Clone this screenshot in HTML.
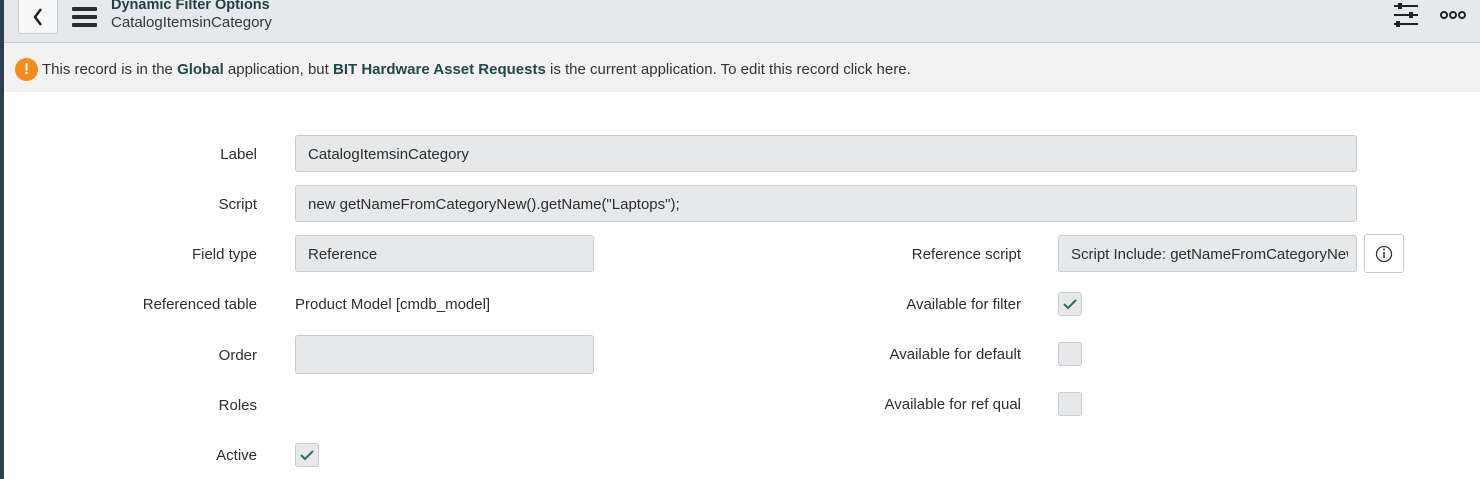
<!DOCTYPE html>
<html><head><style>
body{margin:0;width:1480px;height:479px;background:#fff;font-family:"Liberation Sans",sans-serif;color:#2e2e2e;position:relative;overflow:hidden;font-size:14px}
.strip{position:absolute;left:0;top:0;width:4px;height:479px;background:#2e3d49}
.hdr{position:absolute;left:4px;top:0;right:0;height:42px;background:#e6e9eb;border-bottom:1px solid #c9cccf}
.back{position:absolute;left:14px;top:-4px;width:38px;height:36px;background:#f7f7f7;border:1px solid #c9cccf;border-radius:3px}
.ham{position:absolute;left:68px;top:7px;width:25px}
.ham div{height:4px;background:#2b2b2b;margin-bottom:4px;border-radius:1px}
.t1{position:absolute;left:107px;top:-3px;font-size:14.5px;font-weight:bold;color:#293e40}
.t2{position:absolute;left:107px;top:14px;font-size:15px;color:#293e40}
.ban{position:absolute;left:4px;top:43px;right:0;height:49px;background:#f2f2f2}
.ban .ic{position:absolute;left:11px;top:15px;width:23px;height:23px;border-radius:50%;background:#f88b1c;color:#fff;font-weight:bold;text-align:center;line-height:23px;font-size:16px}
.ban .tx{position:absolute;left:38px;top:18px;font-size:15px;color:#343434}
.ban b{color:#1f4a46}
.lbl{position:absolute;text-align:right;font-size:15px;color:#2e2e2e}
.l{right:1223px}
.r{right:459px}
.fld{position:absolute;height:37px;background:#e6e8ea;border:1px solid #c9cccf;border-radius:3px;box-sizing:border-box;padding-left:12px;line-height:37px;font-size:15px;color:#2e2e2e;white-space:nowrap;overflow:hidden}
.cb{position:absolute;width:24px;height:24px;background:#e6e8ea;border:1px solid #c9cccf;border-radius:3px;box-sizing:border-box}
</style></head><body>
<div class="strip"></div>
<div class="hdr">
<div class="back"><svg width="38" height="36" viewBox="0 0 38 36"><path d="M22 12l-6 8 6 8" stroke="#222" stroke-width="2.5" fill="none"/></svg></div>
<div class="ham"><div></div><div></div><div></div></div>
<div class="t1">Dynamic Filter Options</div>
<div class="t2">CatalogItemsinCategory</div>
<svg style="position:absolute;left:1389px;top:3px" width="26" height="26"><g stroke="#222" stroke-width="2"><path d="M1 3h24M1 12h24M1 21h24"/></g><g fill="#222"><rect x="5" y="0" width="4" height="6"/><rect x="16" y="9" width="4" height="6"/><rect x="3" y="18" width="4" height="6"/></g></svg>
<svg style="position:absolute;left:1435px;top:9px" width="32" height="12"><g fill="none" stroke="#222" stroke-width="2"><circle cx="5" cy="6" r="3"/><circle cx="14" cy="6" r="3"/><circle cx="23" cy="6" r="3"/></g></svg>
</div>
<div class="ban"><div class="ic">!</div><div class="tx">This record is in the <b>Global</b> application, but <b>BIT Hardware Asset Requests</b> is the current application. To edit this record click here.</div></div>

<div class="lbl l" style="top:146px">Label</div>
<div class="fld" style="left:295px;top:135px;width:1062px">CatalogItemsinCategory</div>
<div class="lbl l" style="top:196px">Script</div>
<div class="fld" style="left:295px;top:185px;width:1062px">new getNameFromCategoryNew().getName("Laptops");</div>
<div class="lbl l" style="top:246px">Field type</div>
<div class="fld" style="left:295px;top:235px;width:299px">Reference</div>
<div class="lbl r" style="top:246px">Reference script</div>
<div class="fld" style="left:1058px;top:235px;width:299px;padding-right:10px"><div style="overflow:hidden;width:277px">Script Include: getNameFromCategoryNew</div></div>
<div style="position:absolute;left:1364px;top:234px;width:40px;height:39px;border:1px solid #c9cccf;border-radius:3px;box-sizing:border-box;background:#fff"><svg width="38" height="37"><circle cx="19" cy="19" r="7.5" fill="none" stroke="#333" stroke-width="1.3"/><path d="M19 17v6" stroke="#333" stroke-width="1.5"/><circle cx="19" cy="14.5" r="1" fill="#333"/></svg></div>
<div class="lbl l" style="top:296px">Referenced table</div>
<div style="position:absolute;left:295px;top:296px;font-size:15px">Product Model [cmdb_model]</div>
<div class="lbl r" style="top:296px">Available for filter</div>
<div class="cb" style="left:1058px;top:292px"><svg width="22" height="22"><path d="M5 11l4 4 8-8" stroke="#2c6e63" stroke-width="2" fill="none"/></svg></div>
<div class="lbl l" style="top:347px">Order</div>
<div class="fld" style="left:295px;top:335px;width:299px;height:39px"></div>
<div class="lbl r" style="top:346px">Available for default</div>
<div class="cb" style="left:1058px;top:342px"></div>
<div class="lbl l" style="top:397px">Roles</div>
<div class="lbl r" style="top:396px">Available for ref qual</div>
<div class="cb" style="left:1058px;top:392px"></div>
<div class="lbl l" style="top:447px">Active</div>
<div class="cb" style="left:295px;top:443px"><svg width="22" height="22"><path d="M5 11l4 4 8-8" stroke="#2c6e63" stroke-width="2" fill="none"/></svg></div>
</body></html>
